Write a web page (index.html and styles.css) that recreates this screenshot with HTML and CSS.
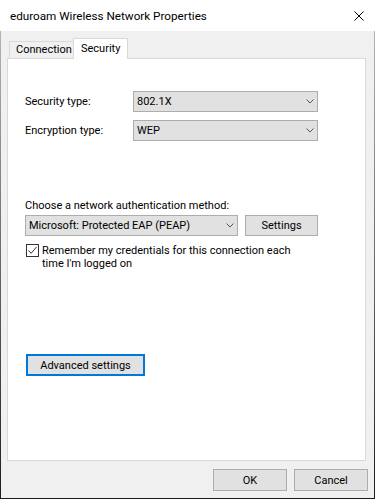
FILE: index.html
```html
<!DOCTYPE html>
<html>
<head>
<meta charset="utf-8">
<link rel="stylesheet" href="styles.css">
</head>
<body>
<div class="window">
  <div class="titlebar">
    <span class="title">eduroam Wireless Network Properties</span>
    <svg class="close" width="10" height="10" viewBox="0 0 10 10"><path d="M0.5 0.5L9.5 9.5M9.5 0.5L0.5 9.5" stroke="#000" stroke-width="1" fill="none"/></svg>
  </div>
  <div class="client">
    <div class="tabs">
      <div class="tab">Connection</div>
      <div class="tab selected">Security</div>
    </div>
    <div class="panel">
      <div class="row">
        <span class="label">Security type:</span>
        <div class="combo wide"><span>802.1X</span><svg class="chev" width="8" height="5" viewBox="0 0 8 5"><path d="M0.5 0.5L4 4L7.5 0.5" stroke="#555" fill="none"/></svg></div>
      </div>
      <div class="row gap">
        <span class="label">Encryption type:</span>
        <div class="combo wide"><span>WEP</span><svg class="chev" width="8" height="5" viewBox="0 0 8 5"><path d="M0.5 0.5L4 4L7.5 0.5" stroke="#555" fill="none"/></svg></div>
      </div>
      <div class="choose">Choose a network authentication method:</div>
      <div class="row auth">
        <div class="combo authcombo"><span>Microsoft: Protected EAP (PEAP)</span><svg class="chev" width="8" height="5" viewBox="0 0 8 5"><path d="M0.5 0.5L4 4L7.5 0.5" stroke="#555" fill="none"/></svg></div>
        <div class="btn settings">Settings</div>
      </div>
      <div class="check">
        <div class="box"><svg width="11" height="11" viewBox="0 0 11 11"><path d="M1.5 5.5L4.2 8.3L9.6 1.8" stroke="#333" stroke-width="1" fill="none"/></svg></div>
        <div class="checktext">Remember my credentials for this connection each<br>time I'm logged on</div>
      </div>
      <div class="btn advanced">Advanced settings</div>
    </div>
    <div class="footer">
      <div class="btn foot">OK</div>
      <div class="btn foot">Cancel</div>
    </div>
  </div>
</div>
</body>
</html>
```
FILE: styles.css
```css
* { box-sizing: border-box; }
html, body { margin: 0; padding: 0; }
body {
  width: 375px;
  height: 499px;
  overflow: hidden;
  font-family: Roboto, "Liberation Sans", sans-serif;
  font-size: 11px;
  color: #000;
  background: #fff;
}
.window {
  width: 375px;
  height: 499px;
  display: flex;
  flex-direction: column;
}
.titlebar {
  height: 31px;
  flex: none;
  background: #fff;
  display: flex;
  align-items: center;
  justify-content: space-between;
  padding: 0 11px 0 10px;
}
.title { font-size: 11.7px; line-height: 16px; padding-top: 1px; }
.close { display: block; margin-top: 1px; }
.client {
  flex: 1;
  background: #f0f0f0;
  border-left: 1px solid #888;
  border-right: 1px solid #888;
  border-bottom: 1px solid #1c1c1c;
  border-image: linear-gradient(#b4b4b4, #1c1c1c) 1;
  border-top: 0;
  display: flex;
  flex-direction: column;
}
.tabs {
  margin-top: 7px;
  height: 20px;
  padding-left: 8px;
  display: flex;
  align-items: flex-end;
  flex: none;
}
.tab {
  height: 17px;
  width: 64px;
  border: 1px solid #d9d9d9;
  border-bottom: 0;
  border-right: 0;
  background: #f0f0f0;
  padding-left: 6px;
  line-height: 16px;
  white-space: nowrap;
}
.tab.selected {
  height: 21px;
  width: 55px;
  border-right: 1px solid #d9d9d9;
  background: #fff;
  padding-left: 7px;
  line-height: 19px;
  margin-bottom: -1px;
  position: relative;
  z-index: 1;
}
.panel {
  flex: 1;
  margin: 0 8px 0 6px;
  background: #fff;
  border: 1px solid #d9d9d9;
  padding: 32px 0 0 17px;
  display: flex;
  flex-direction: column;
  align-items: flex-start;
}
.row {
  display: flex;
  align-items: center;
  height: 21px;
}
.row.gap { margin-top: 8px; }
.label { width: 108px; }
.combo {
  height: 21px;
  background: #e1e1e1;
  border: 1px solid #adadad;
  display: flex;
  align-items: center;
  justify-content: space-between;
  padding: 0 3px 0 3px;
}
.combo.wide { width: 185px; padding-right: 3px; }
.combo .chev { display: block; margin-right: 0; }
.choose { margin-top: 57px; line-height: 15px; height: 15px; }
.row.auth { margin-top: 2px; }
.authcombo { width: 213px; padding-right: 3px; }
.btn {
  background: #e1e1e1;
  border: 1px solid #adadad;
  display: flex;
  align-items: center;
  justify-content: center;
}
.settings { width: 73px; height: 21px; margin-left: 7px; }
.check {
  margin-top: 8px;
  margin-left: 1px;
  display: flex;
  align-items: flex-start;
}
.box {
  width: 13px;
  height: 13px;
  border: 1px solid #333;
  background: #fff;
  display: flex;
  flex: none;
}
.checktext { margin-left: 3px; line-height: 13px; margin-top: 0; }
.advanced {
  margin-top: 84px;
  margin-left: 1px;
  width: 119px;
  height: 22px;
  border: 2px solid #0078d7;
}
.footer {
  flex: none;
  display: flex;
  justify-content: flex-end;
  padding: 8px 6px 7px 0;
  gap: 7px;
}
.btn.foot { width: 74px; height: 22px; }
```
